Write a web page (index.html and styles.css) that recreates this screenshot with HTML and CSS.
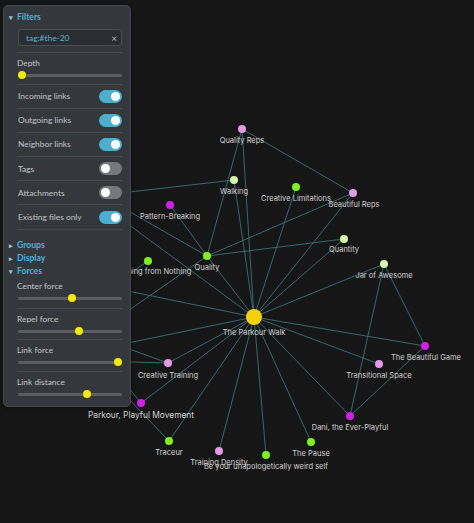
FILE: index.html
```html
<!DOCTYPE html>
<html>
<head>
<meta charset="utf-8">
<link rel="stylesheet" href="styles.css">
</head>
<body>
<div class="stage">
  <svg class="graph" width="474" height="523" viewBox="0 0 474 523" xmlns="http://www.w3.org/2000/svg">
    <g class="edges">
      <line x1="254" y1="317" x2="242" y2="129"/>
      <line x1="254" y1="317" x2="234" y2="180"/>
      <line x1="254" y1="317" x2="296" y2="187"/>
      <line x1="254" y1="317" x2="353" y2="193"/>
      <line x1="254" y1="317" x2="344" y2="239"/>
      <line x1="254" y1="317" x2="384" y2="264"/>
      <line x1="254" y1="317" x2="425" y2="346"/>
      <line x1="254" y1="317" x2="379" y2="364"/>
      <line x1="254" y1="317" x2="350" y2="416"/>
      <line x1="254" y1="317" x2="311" y2="442"/>
      <line x1="254" y1="317" x2="266" y2="455"/>
      <line x1="254" y1="317" x2="219" y2="451"/>
      <line x1="254" y1="317" x2="169" y2="441"/>
      <line x1="254" y1="317" x2="141" y2="403"/>
      <line x1="254" y1="317" x2="168" y2="363"/>
      <line x1="254" y1="317" x2="207" y2="256"/>
      <line x1="242" y1="129" x2="207" y2="256"/>
      <line x1="242" y1="129" x2="353" y2="193"/>
      <line x1="207" y1="256" x2="353" y2="193"/>
      <line x1="207" y1="256" x2="344" y2="239"/>
      <line x1="207" y1="256" x2="170" y2="205"/>
      <line x1="384" y1="264" x2="425" y2="346"/>
      <line x1="384" y1="264" x2="350" y2="416"/>
      <line x1="425" y1="346" x2="350" y2="416"/>
      <line x1="60" y1="200" x2="234" y2="180"/>
      <line x1="50" y1="166" x2="207" y2="256"/>
      <line x1="60" y1="174" x2="254" y2="317"/>
      <line x1="60" y1="277" x2="254" y2="317"/>
      <line x1="60" y1="358" x2="207" y2="256"/>
      <line x1="60" y1="322" x2="148" y2="261"/>
      <line x1="60" y1="357" x2="254" y2="317"/>
      <line x1="60" y1="324" x2="168" y2="363"/>
      <line x1="60" y1="360" x2="168" y2="363"/>
      <line x1="80" y1="348" x2="169" y2="441"/>
      <line x1="90" y1="340" x2="141" y2="403"/>
    </g>
    <g class="nodes">
      <circle cx="242" cy="129" r="4" class="pink"/>
      <circle cx="234" cy="180" r="4" class="pale"/>
      <circle cx="296" cy="187" r="4" class="lime"/>
      <circle cx="353" cy="193" r="4" class="pink"/>
      <circle cx="170" cy="205" r="4" class="mag"/>
      <circle cx="207" cy="256" r="4" class="lime"/>
      <circle cx="344" cy="239" r="4" class="pale"/>
      <circle cx="148" cy="261" r="4" class="lime"/>
      <circle cx="384" cy="264" r="4" class="pale"/>
      <circle cx="425" cy="346" r="4" class="mag"/>
      <circle cx="379" cy="364" r="4" class="pink"/>
      <circle cx="350" cy="416" r="4" class="mag"/>
      <circle cx="168" cy="363" r="4" class="pink"/>
      <circle cx="141" cy="403" r="4" class="mag"/>
      <circle cx="169" cy="441" r="4" class="lime"/>
      <circle cx="219" cy="451" r="4" class="pink"/>
      <circle cx="266" cy="455" r="4" class="lime"/>
      <circle cx="311" cy="442" r="4" class="lime"/>
      <circle cx="254" cy="317" r="8" class="gold"/>
    </g>
    <g class="labels">
      <text x="242" y="143">Quality Reps</text>
      <text x="234" y="194">Walking</text>
      <text x="296" y="201">Creative Limitations</text>
      <text x="354" y="207">Beautiful Reps</text>
      <text x="170" y="219">Pattern-Breaking</text>
      <text x="207" y="270">Quality</text>
      <text x="344" y="252">Quantity</text>
      <text x="148" y="274">Something from Nothing</text>
      <text x="384" y="278">Jar of Awesome</text>
      <text x="426" y="360">The Beautiful Game</text>
      <text x="379" y="378">Transitional Space</text>
      <text x="350" y="430">Dani, the Ever-Playful</text>
      <text x="168" y="378">Creative Training</text>
      <text x="141" y="418" class="big">Parkour, Playful Movement</text>
      <text x="169" y="455">Traceur</text>
      <text x="219" y="465">Training Density</text>
      <text x="266" y="469">Be your unapologetically weird self</text>
      <text x="311" y="456">The Pause</text>
      <text x="254" y="335">The Parkour Walk</text>
    </g>
  </svg>

  <div class="panel">
    <div class="head"><span class="caret">▾</span>Filters</div>
    <div class="search"><span class="query">tag:#the-20</span><span class="clear">×</span></div>
    <div class="slider-block">
      <div class="label">Depth</div>
      <div class="range"><span class="thumb" style="left:0%"></span></div>
    </div>
    <div class="toggle-row"><span class="label">Incoming links</span><span class="toggle on"></span></div>
    <div class="toggle-row"><span class="label">Outgoing links</span><span class="toggle on"></span></div>
    <div class="toggle-row"><span class="label">Neighbor links</span><span class="toggle on"></span></div>
    <div class="toggle-row"><span class="label">Tags</span><span class="toggle"></span></div>
    <div class="toggle-row"><span class="label">Attachments</span><span class="toggle"></span></div>
    <div class="toggle-row"><span class="label">Existing files only</span><span class="toggle on"></span></div>
    <div class="sections">
      <div class="head small"><span class="caret">▸</span>Groups</div>
      <div class="head small"><span class="caret">▸</span>Display</div>
      <div class="head small"><span class="caret">▾</span>Forces</div>
    </div>
    <div class="slider-block first">
      <div class="label">Center force</div>
      <div class="range"><span class="thumb" style="left:52%"></span></div>
    </div>
    <div class="slider-block">
      <div class="label">Repel force</div>
      <div class="range"><span class="thumb" style="left:59%"></span></div>
    </div>
    <div class="slider-block">
      <div class="label">Link force</div>
      <div class="range"><span class="thumb" style="left:100%"></span></div>
    </div>
    <div class="slider-block last">
      <div class="label">Link distance</div>
      <div class="range"><span class="thumb" style="left:68%"></span></div>
    </div>
  </div>
</div>
</body>
</html>
```
FILE: styles.css
```css
html, body {
  margin: 0;
  padding: 0;
  background: #161616;
}
.stage {
  position: relative;
  width: 474px;
  height: 523px;
  overflow: hidden;
  background: #161616;
}
.graph {
  position: absolute;
  left: 0;
  top: 0;
}
.edges line {
  stroke: #3e7e88;
  stroke-width: 0.8;
}
.nodes .pink { fill: #e49ae6; }
.nodes .pale { fill: #d6f5aa; }
.nodes .lime { fill: #7ef01c; }
.nodes .mag { fill: #cf1fe8; }
.nodes .gold { fill: #f5d10c; }
.labels text {
  font-family: Inter, "Liberation Sans", sans-serif;
  font-size: 7.5px;
  fill: #d2d2d2;
  text-anchor: middle;
}
.labels text.big {
  font-size: 8.4px;
}

.panel {
  position: absolute;
  left: 3px;
  top: 5px;
  width: 128px;
  box-sizing: border-box;
  padding: 5px 8px 7px 13px;
  background: #34373c;
  border: 1px solid #46494e;
  border-radius: 5px;
  font-family: Lato, "Noto Sans", sans-serif;
  font-size: 8.4px;
  color: #c3c5c8;
  display: flex;
  flex-direction: column;
  box-shadow: 0 1px 4px rgba(0,0,0,0.5);
}
.head {
  height: 12px;
  line-height: 12px;
  margin-left: -8px;
  color: #4fb2d4;
  font-weight: 700;
  font-size: 8.6px;
  display: flex;
  align-items: center;
}
.caret {
  width: 8px;
  font-size: 7px;
  color: #8fc6db;
}
.search {
  margin-top: 6px;
  height: 17px;
  box-sizing: border-box;
  background: #2a2d31;
  border: 1px solid #4a4d52;
  border-radius: 3px;
  display: flex;
  align-items: center;
  justify-content: space-between;
  padding: 0 4px 0 7px;
  margin-bottom: 6px;
  margin-left: 1px;
}
.query {
  color: #5fb0cf;
  font-size: 8.4px;
}
.clear {
  color: #b9bbbe;
  font-size: 10px;
  line-height: 1;
}
.slider-block {
  border-top: 1px solid #474a4f;
  padding-top: 4px;
  height: 31.5px;
  box-sizing: border-box;
  display: flex;
  flex-direction: column;
}
.slider-block .label {
  height: 12px;
  line-height: 12px;
}
.slider-block.first {
  border-top: none;
  padding-top: 3px;
  height: 31px;
}
.range {
  position: relative;
  height: 10px;
  margin: 1px 4px 0 5px;
}
.range::before {
  content: "";
  position: absolute;
  left: -4px;
  right: -4px;
  top: 4px;
  height: 3px;
  border-radius: 2px;
  background: #5a5d62;
}
.thumb {
  position: absolute;
  top: 1px;
  width: 8px;
  height: 8px;
  margin-left: -4px;
  border-radius: 50%;
  background: #f3e90c;
}
.toggle-row {
  border-top: 1px solid #474a4f;
  height: 24.2px;
  box-sizing: border-box;
  display: flex;
  align-items: center;
  justify-content: space-between;
}
.toggle-row .label {
  margin-left: 1px;
}
.toggle {
  position: relative;
  width: 23px;
  height: 13px;
  border-radius: 7px;
  background: #77797d;
}
.toggle::after {
  content: "";
  position: absolute;
  top: 2px;
  left: 2px;
  width: 9px;
  height: 9px;
  border-radius: 50%;
  background: #ffffff;
}
.toggle.on {
  background: #4bb0cf;
}
.toggle.on::after {
  left: 12px;
}
.sections {
  border-top: 1px solid #474a4f;
  padding-top: 9px;
  display: flex;
  flex-direction: column;
  gap: 1px;
}
.slider-block.last {
  height: auto;
}
```
